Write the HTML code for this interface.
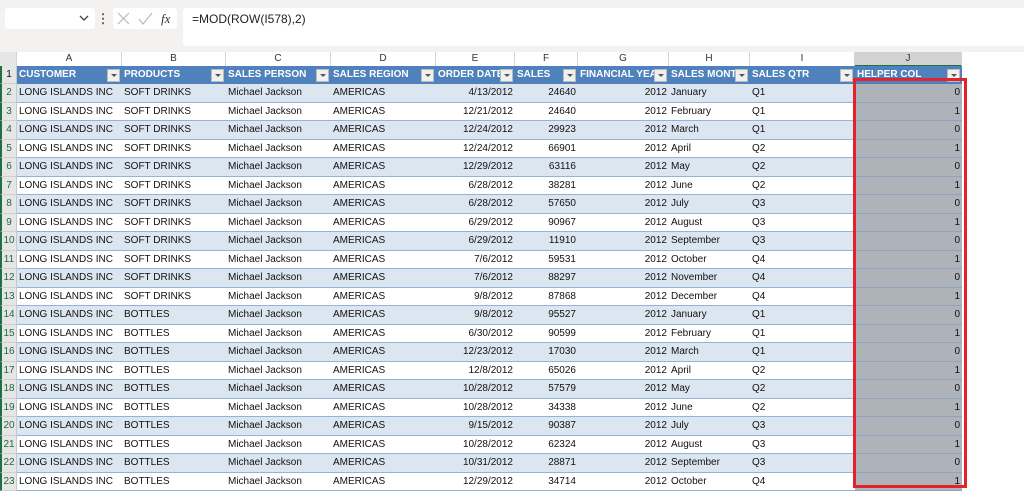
<!DOCTYPE html><html><head><meta charset="utf-8"><style>
*{margin:0;padding:0;box-sizing:border-box}
body{width:1024px;height:490px;overflow:hidden;background:#fff;font-family:"Liberation Sans",Arial,sans-serif;position:relative}
.top{position:absolute;left:0;top:0;width:1024px;height:52px;background:#f3f2f1}
.nb{position:absolute;left:5px;top:8px;width:90px;height:21px;background:#fff;border-radius:3px}
.fb{position:absolute;left:183px;top:8px;width:841px;height:38px;background:#fff;border-radius:3px 0 0 3px;font-size:12px;padding:4px 0 0 9px;color:#222}
.ic{position:absolute;left:113px;top:8px;width:64px;height:21px;background:#fff;border-radius:3px}
.r{position:absolute;left:0;width:962px;height:18.5px;display:grid;grid-template-columns:17px 105px 104px 105px 105px 79px 63px 91px 81px 105px 107px;font-size:10px;line-height:18px;color:#111}
.r>div{border-bottom:1px solid #95b3d7;padding:0 2px;white-space:nowrap;overflow:hidden}
.r>div:first-child{background:#e6e6e6;border-bottom:1px solid #d0d0d0;border-right:1px solid #c8c8c8;text-align:center;color:#1e6b3b;padding:0;border-left:2px solid #1e7145}
.e>div{background:#dce6f1}
.r>div.n{text-align:right}
.r>div.j{background:#aeb3ba;text-align:right;border-bottom:1px solid #8fa3bd}
.ch{position:absolute;top:52px;left:0;width:962px;height:13.5px;display:grid;grid-template-columns:17px 105px 104px 105px 105px 79px 63px 91px 81px 105px 107px;font-size:10px;line-height:13px;text-align:center;color:#333}
.ch>div{background:#fff;border-right:1px solid #d4d4d4;border-bottom:1px solid #d4d4d4}
.ch>div:first-child{background:#e6e6e6}
.ch>div:last-child{background:#d2d2d2;border-bottom:2px solid #1e7145}
.h{top:65.5px;font-weight:bold;color:#fff}
.h>div{background:#4f81bd;border-bottom:none;position:relative;padding-right:16px}
.h>div:first-child{color:#111;font-weight:normal}
.h>div:not(:first-child)::after{content:"";position:absolute;right:2px;top:3px;width:11px;height:11px;background:#f0f0f0;border:1px solid #bbb}
.h>div:not(:first-child)::before{content:"";position:absolute;right:5px;top:8px;border-left:3px solid transparent;border-right:3px solid transparent;border-top:3px solid #555;z-index:2}
.red{position:absolute;left:853px;top:78px;width:114px;height:410px;border:3px solid #e4222b}
</style></head><body>
<div class="top"></div>
<div class="nb"><svg style="position:absolute;left:74px;top:6px" width="10" height="8"><path d="M1 2l4 4 4-4" stroke="#444" fill="none" stroke-width="1.3"/></svg></div>
<div style="position:absolute;left:102px;top:12px;width:2px;height:13px;background:radial-gradient(circle,#666 1px,transparent 1.2px) 0 0/2px 4.5px"></div>
<div class="ic"><svg width="64" height="21"><path d="M5 5l11 11M16 5L5 16" stroke="#bbb" stroke-width="1.2"/><path d="M26 11l4 5 9-11" stroke="#bbb" stroke-width="1.2" fill="none"/><text x="48" y="15" font-family="Liberation Serif" font-style="italic" font-size="13" fill="#333">fx</text></svg></div>
<div class="fb">=MOD(ROW(I578),2)</div>
<div class="ch"><div></div><div>A</div><div>B</div><div>C</div><div>D</div><div>E</div><div>F</div><div>G</div><div>H</div><div>I</div><div>J</div></div>
<div class="r h"><div>1</div><div>CUSTOMER</div><div>PRODUCTS</div><div>SALES PERSON</div><div>SALES REGION</div><div>ORDER DATE</div><div>SALES</div><div>FINANCIAL YEAR</div><div>SALES MONTH</div><div>SALES QTR</div><div>HELPER COL</div></div>
<div class="r e" style="top:84px"><div>2</div><div>LONG ISLANDS INC</div><div>SOFT DRINKS</div><div>Michael Jackson</div><div>AMERICAS</div><div class="n">4/13/2012</div><div class="n">24640</div><div class="n">2012</div><div>January</div><div>Q1</div><div class="j">0</div></div>
<div class="r" style="top:102.5px"><div>3</div><div>LONG ISLANDS INC</div><div>SOFT DRINKS</div><div>Michael Jackson</div><div>AMERICAS</div><div class="n">12/21/2012</div><div class="n">24640</div><div class="n">2012</div><div>February</div><div>Q1</div><div class="j">1</div></div>
<div class="r e" style="top:121px"><div>4</div><div>LONG ISLANDS INC</div><div>SOFT DRINKS</div><div>Michael Jackson</div><div>AMERICAS</div><div class="n">12/24/2012</div><div class="n">29923</div><div class="n">2012</div><div>March</div><div>Q1</div><div class="j">0</div></div>
<div class="r" style="top:139.5px"><div>5</div><div>LONG ISLANDS INC</div><div>SOFT DRINKS</div><div>Michael Jackson</div><div>AMERICAS</div><div class="n">12/24/2012</div><div class="n">66901</div><div class="n">2012</div><div>April</div><div>Q2</div><div class="j">1</div></div>
<div class="r e" style="top:158px"><div>6</div><div>LONG ISLANDS INC</div><div>SOFT DRINKS</div><div>Michael Jackson</div><div>AMERICAS</div><div class="n">12/29/2012</div><div class="n">63116</div><div class="n">2012</div><div>May</div><div>Q2</div><div class="j">0</div></div>
<div class="r" style="top:176.5px"><div>7</div><div>LONG ISLANDS INC</div><div>SOFT DRINKS</div><div>Michael Jackson</div><div>AMERICAS</div><div class="n">6/28/2012</div><div class="n">38281</div><div class="n">2012</div><div>June</div><div>Q2</div><div class="j">1</div></div>
<div class="r e" style="top:195px"><div>8</div><div>LONG ISLANDS INC</div><div>SOFT DRINKS</div><div>Michael Jackson</div><div>AMERICAS</div><div class="n">6/28/2012</div><div class="n">57650</div><div class="n">2012</div><div>July</div><div>Q3</div><div class="j">0</div></div>
<div class="r" style="top:213.5px"><div>9</div><div>LONG ISLANDS INC</div><div>SOFT DRINKS</div><div>Michael Jackson</div><div>AMERICAS</div><div class="n">6/29/2012</div><div class="n">90967</div><div class="n">2012</div><div>August</div><div>Q3</div><div class="j">1</div></div>
<div class="r e" style="top:232px"><div>10</div><div>LONG ISLANDS INC</div><div>SOFT DRINKS</div><div>Michael Jackson</div><div>AMERICAS</div><div class="n">6/29/2012</div><div class="n">11910</div><div class="n">2012</div><div>September</div><div>Q3</div><div class="j">0</div></div>
<div class="r" style="top:250.5px"><div>11</div><div>LONG ISLANDS INC</div><div>SOFT DRINKS</div><div>Michael Jackson</div><div>AMERICAS</div><div class="n">7/6/2012</div><div class="n">59531</div><div class="n">2012</div><div>October</div><div>Q4</div><div class="j">1</div></div>
<div class="r e" style="top:269px"><div>12</div><div>LONG ISLANDS INC</div><div>SOFT DRINKS</div><div>Michael Jackson</div><div>AMERICAS</div><div class="n">7/6/2012</div><div class="n">88297</div><div class="n">2012</div><div>November</div><div>Q4</div><div class="j">0</div></div>
<div class="r" style="top:287.5px"><div>13</div><div>LONG ISLANDS INC</div><div>SOFT DRINKS</div><div>Michael Jackson</div><div>AMERICAS</div><div class="n">9/8/2012</div><div class="n">87868</div><div class="n">2012</div><div>December</div><div>Q4</div><div class="j">1</div></div>
<div class="r e" style="top:306px"><div>14</div><div>LONG ISLANDS INC</div><div>BOTTLES</div><div>Michael Jackson</div><div>AMERICAS</div><div class="n">9/8/2012</div><div class="n">95527</div><div class="n">2012</div><div>January</div><div>Q1</div><div class="j">0</div></div>
<div class="r" style="top:324.5px"><div>15</div><div>LONG ISLANDS INC</div><div>BOTTLES</div><div>Michael Jackson</div><div>AMERICAS</div><div class="n">6/30/2012</div><div class="n">90599</div><div class="n">2012</div><div>February</div><div>Q1</div><div class="j">1</div></div>
<div class="r e" style="top:343px"><div>16</div><div>LONG ISLANDS INC</div><div>BOTTLES</div><div>Michael Jackson</div><div>AMERICAS</div><div class="n">12/23/2012</div><div class="n">17030</div><div class="n">2012</div><div>March</div><div>Q1</div><div class="j">0</div></div>
<div class="r" style="top:361.5px"><div>17</div><div>LONG ISLANDS INC</div><div>BOTTLES</div><div>Michael Jackson</div><div>AMERICAS</div><div class="n">12/8/2012</div><div class="n">65026</div><div class="n">2012</div><div>April</div><div>Q2</div><div class="j">1</div></div>
<div class="r e" style="top:380px"><div>18</div><div>LONG ISLANDS INC</div><div>BOTTLES</div><div>Michael Jackson</div><div>AMERICAS</div><div class="n">10/28/2012</div><div class="n">57579</div><div class="n">2012</div><div>May</div><div>Q2</div><div class="j">0</div></div>
<div class="r" style="top:398.5px"><div>19</div><div>LONG ISLANDS INC</div><div>BOTTLES</div><div>Michael Jackson</div><div>AMERICAS</div><div class="n">10/28/2012</div><div class="n">34338</div><div class="n">2012</div><div>June</div><div>Q2</div><div class="j">1</div></div>
<div class="r e" style="top:417px"><div>20</div><div>LONG ISLANDS INC</div><div>BOTTLES</div><div>Michael Jackson</div><div>AMERICAS</div><div class="n">9/15/2012</div><div class="n">90387</div><div class="n">2012</div><div>July</div><div>Q3</div><div class="j">0</div></div>
<div class="r" style="top:435.5px"><div>21</div><div>LONG ISLANDS INC</div><div>BOTTLES</div><div>Michael Jackson</div><div>AMERICAS</div><div class="n">10/28/2012</div><div class="n">62324</div><div class="n">2012</div><div>August</div><div>Q3</div><div class="j">1</div></div>
<div class="r e" style="top:454px"><div>22</div><div>LONG ISLANDS INC</div><div>BOTTLES</div><div>Michael Jackson</div><div>AMERICAS</div><div class="n">10/31/2012</div><div class="n">28871</div><div class="n">2012</div><div>September</div><div>Q3</div><div class="j">0</div></div>
<div class="r" style="top:472.5px"><div>23</div><div>LONG ISLANDS INC</div><div>BOTTLES</div><div>Michael Jackson</div><div>AMERICAS</div><div class="n">12/29/2012</div><div class="n">34714</div><div class="n">2012</div><div>October</div><div>Q4</div><div class="j">1</div></div>
<div class="red"></div>
</body></html>
